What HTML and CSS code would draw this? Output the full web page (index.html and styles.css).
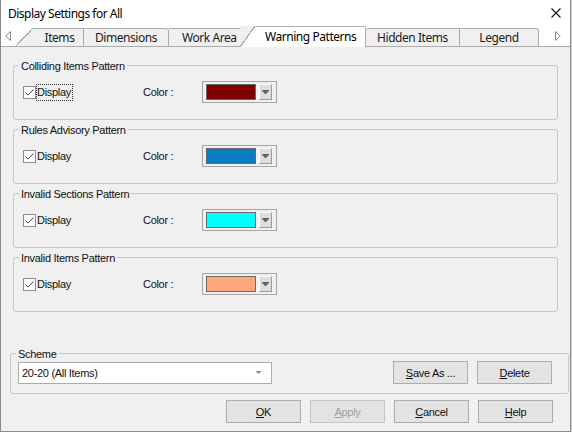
FILE: index.html
```html
<!DOCTYPE html>
<html>
<head>
<meta charset="utf-8">
<title>Display Settings for All</title>
<link rel="stylesheet" href="styles.css">
</head>
<body>
<div class="window">
  <div class="titlebar">
    <span class="title">Display Settings for All</span>
    <svg class="close" width="10" height="10" viewBox="0 0 10 10"><path d="M0.5 0.5 L9.5 9.5 M9.5 0.5 L0.5 9.5" stroke="#111" stroke-width="1.1" fill="none"/></svg>
  </div>
  <div class="tabstrip">
    <span class="arrow-area left"><svg width="6" height="10" viewBox="0 0 6 10"><path d="M5.5 0.5 L0.8 5 L5.5 9.5 Z" stroke="#8a8a8a" fill="none" stroke-width="1"/></svg></span>
    <span class="slant first"></span>
    <span class="tab t-items">Items</span>
    <span class="tab t-dim">Dimensions</span>
    <span class="tab t-work">Work Area</span>
    <span class="slant to-active"></span>
    <span class="tab active t-warn">Warning Patterns</span>
    <span class="tab t-hidden">Hidden Items</span>
    <span class="tab t-legend">Legend</span>
    <span class="arrow-area right"><svg width="6" height="10" viewBox="0 0 6 10"><path d="M0.5 0.5 L5.2 5 L0.5 9.5 Z" stroke="#8a8a8a" fill="none" stroke-width="1"/></svg></span>
  </div>

  <div class="panel">
    <div class="group">
      <div class="legend">Colliding Items Pattern</div>
      <div class="row">
        <div class="check">
          <span class="cb"><svg width="11" height="11" viewBox="0 0 11 11"><path d="M1.5 5.5 L4 8 L9.5 2.5" stroke="#404040" stroke-width="1" fill="none"/></svg></span>
          <span class="cblabel focus">Display</span>
        </div>
        <span class="clabel">Color :</span>
        <div class="colorbox">
          <span class="swatch c-maroon"></span>
          <span class="ddbtn"><svg width="11" height="14" viewBox="0 0 11 14"><path d="M1.5 5 L9.5 5 L5.5 9.5 Z" fill="#606060"/></svg></span>
        </div>
      </div>
    </div>

    <div class="group">
      <div class="legend">Rules Advisory Pattern</div>
      <div class="row">
        <div class="check">
          <span class="cb"><svg width="11" height="11" viewBox="0 0 11 11"><path d="M1.5 5.5 L4 8 L9.5 2.5" stroke="#404040" stroke-width="1" fill="none"/></svg></span>
          <span class="cblabel">Display</span>
        </div>
        <span class="clabel">Color :</span>
        <div class="colorbox">
          <span class="swatch c-blue"></span>
          <span class="ddbtn"><svg width="11" height="14" viewBox="0 0 11 14"><path d="M1.5 5 L9.5 5 L5.5 9.5 Z" fill="#606060"/></svg></span>
        </div>
      </div>
    </div>

    <div class="group">
      <div class="legend">Invalid Sections Pattern</div>
      <div class="row">
        <div class="check">
          <span class="cb"><svg width="11" height="11" viewBox="0 0 11 11"><path d="M1.5 5.5 L4 8 L9.5 2.5" stroke="#404040" stroke-width="1" fill="none"/></svg></span>
          <span class="cblabel">Display</span>
        </div>
        <span class="clabel">Color :</span>
        <div class="colorbox">
          <span class="swatch c-cyan"></span>
          <span class="ddbtn"><svg width="11" height="14" viewBox="0 0 11 14"><path d="M1.5 5 L9.5 5 L5.5 9.5 Z" fill="#606060"/></svg></span>
        </div>
      </div>
    </div>

    <div class="group">
      <div class="legend">Invalid Items Pattern</div>
      <div class="row">
        <div class="check">
          <span class="cb"><svg width="11" height="11" viewBox="0 0 11 11"><path d="M1.5 5.5 L4 8 L9.5 2.5" stroke="#404040" stroke-width="1" fill="none"/></svg></span>
          <span class="cblabel">Display</span>
        </div>
        <span class="clabel">Color :</span>
        <div class="colorbox">
          <span class="swatch c-salmon"></span>
          <span class="ddbtn"><svg width="11" height="14" viewBox="0 0 11 14"><path d="M1.5 5 L9.5 5 L5.5 9.5 Z" fill="#606060"/></svg></span>
        </div>
      </div>
    </div>
  </div>

  <div class="group scheme">
    <div class="legend">Scheme</div>
    <div class="scheme-row">
      <div class="combo">
        <span class="combo-text">20-20 (All Items)</span>
        <svg width="7" height="4" viewBox="0 0 7 4"><path d="M0.5 0 L6.5 0 L3.5 3 Z" fill="#8a8a8a"/></svg>
      </div>
      <div class="btns">
        <span class="btn"><u>S</u>ave As ...</span>
        <span class="btn"><u>D</u>elete</span>
      </div>
    </div>
  </div>

  <div class="bottom-btns">
    <span class="btn"><u>O</u>K</span>
    <span class="btn disabled"><u>A</u>pply</span>
    <span class="btn"><u>C</u>ancel</span>
    <span class="btn"><u>H</u>elp</span>
  </div>
</div>
</body>
</html>
```

FILE: styles.css
```css
html, body {
  margin: 0;
  padding: 0;
}

body {
  width: 572px;
  height: 432px;
  overflow: hidden;
  background: #d4d4d4;
  font-family: "Liberation Sans", Arial, sans-serif;
  font-size: 11px;
  letter-spacing: -0.3px;
  color: #000;
}

.window {
  width: 571px;
  height: 432px;
  box-sizing: border-box;
  background: #f0f0f0;
  border-left: 1px solid #8a8a8a;
  border-right: 1px solid #8a8a8a;
  border-bottom: 1px solid #8a8a8a;
  display: flex;
  flex-direction: column;
}

/* Title bar */
.titlebar {
  height: 26px;
  flex: none;
  background: #fff;
  display: flex;
  align-items: center;
  padding-left: 7px;
}

.title {
  font-family: "Noto Sans", "Open Sans", sans-serif;
  font-size: 12px;
  letter-spacing: -0.5px;
  color: #000;
}

.close {
  margin-left: auto;
  margin-right: 9px;
}

/* Tabs */
.tabstrip {
  height: 21px;
  flex: none;
  background: #fff;
  display: flex;
  align-items: flex-end;
  font-family: "Noto Sans", "Open Sans", sans-serif;
  font-size: 12px;
  letter-spacing: -0.45px;
}

.arrow-area {
  box-sizing: border-box;
  height: 21px;
  border-bottom: 1px solid #acacac;
  display: flex;
  align-items: center;
}

.arrow-area.left {
  width: 15px;
  padding-left: 4px;
}

.arrow-area.right {
  flex: 1;
  padding-left: 16px;
}

.slant {
  box-sizing: border-box;
  flex: none;
}

.slant.first {
  width: 17px;
  height: 19px;
  border-bottom: 1px solid #acacac;
  background: linear-gradient(to bottom right, #fff calc(50% - 0.6px), #acacac calc(50% - 0.6px), #acacac calc(50% + 0.6px), #f0f0f0 calc(50% + 0.6px));
}

.slant.to-active {
  width: 15px;
  height: 21px;
  background: linear-gradient(to bottom right, #f0f0f0 calc(50% - 0.6px), #acacac calc(50% - 0.6px), #acacac calc(50% + 0.6px), #fff calc(50% + 0.6px));
}

.tab {
  box-sizing: border-box;
  flex: none;
  height: 19px;
  background: #f0f0f0;
  border-top: 1px solid #acacac;
  border-bottom: 1px solid #acacac;
  display: flex;
  align-items: center;
  justify-content: center;
  color: #1a1a1a;
}

.t-items {
  width: 51px;
  border-right: 1px solid #acacac;
  padding-left: 3px;
}

.t-dim {
  width: 85px;
  border-right: 1px solid #acacac;
  border-top-right-radius: 3px;
}

.t-work {
  width: 71px;
  justify-content: flex-start;
  padding-left: 13px;
}

.tab.active {
  width: 111px;
  height: 21px;
  background: #fff;
  border-bottom: 0;
  border-right: 1px solid #acacac;
  border-top-right-radius: 2px;
  justify-content: flex-start;
  padding-left: 10px;
  padding-bottom: 1px;
  color: #000;
}

.t-hidden {
  width: 94px;
  border-right: 1px solid #acacac;
  border-top-left-radius: 3px;
}

.t-legend {
  width: 79px;
  border-right: 1px solid #acacac;
  border-top-right-radius: 3px;
}

/* Panel and groups */
.panel {
  flex: none;
  padding-top: 18px;
}

.group {
  box-sizing: border-box;
  width: 545px;
  height: 55px;
  margin: 0 0 9px 12px;
  border: 1px solid #c6c6c6;
  border-radius: 3px;
}

.legend {
  width: fit-content;
  margin: -7px 0 0 5px;
  padding: 0 2px;
  line-height: 14px;
  background: #f0f0f0;
  color: #111;
}

.row {
  display: flex;
  align-items: center;
  height: 22px;
  margin-top: 8px;
  padding-left: 9px;
}

.check {
  width: 120px;
  display: flex;
  align-items: center;
}

.cb {
  box-sizing: border-box;
  width: 13px;
  height: 13px;
  border: 1px solid #8c8c8c;
  background: #fbfbfb;
  display: flex;
}

.cblabel {
  border: 1px dotted transparent;
  padding: 0 1px 0 0;
  line-height: 15px;
  color: #111;
}

.cblabel.focus {
  border-color: #333;
}

.clabel {
  width: 59px;
  color: #111;
}

.colorbox {
  box-sizing: border-box;
  width: 75px;
  height: 22px;
  border: 1px solid #a6a6a6;
  display: flex;
  align-items: center;
  padding-left: 3px;
  gap: 3px;
}

.swatch {
  box-sizing: border-box;
  width: 50px;
  height: 16px;
  border: 1px solid #6a6a6a;
}

.c-maroon { background: #800000; }
.c-blue { background: #0a7cc1; }
.c-cyan { background: #00ffff; }
.c-salmon { background: #ffa67c; }

.ddbtn {
  box-sizing: border-box;
  width: 13px;
  height: 16px;
  background: #dedede;
  border-top: 1px solid #f8f8f8;
  border-left: 1px solid #f8f8f8;
  border-right: 1px solid #9a9a9a;
  border-bottom: 1px solid #9a9a9a;
  display: flex;
}

/* Scheme */
.group.scheme {
  width: 559px;
  height: 41px;
  margin: 32px 0 0 9px;
  flex: none;
}

.scheme-row {
  display: flex;
  align-items: flex-start;
  padding: 0 16px 0 7px;
}

.combo {
  box-sizing: border-box;
  width: 254px;
  height: 22px;
  margin-top: 1px;
  background: #fff;
  border: 1px solid #acacac;
  display: flex;
  align-items: center;
  padding: 0 9px 0 3px;
}

.combo-text {
  flex: 1;
  color: #111;
}

.btns {
  margin-left: auto;
  display: flex;
  gap: 9px;
}

.btn {
  box-sizing: border-box;
  width: 75px;
  height: 23px;
  background: #e3e3e3;
  border: 1px solid #adadad;
  display: flex;
  align-items: center;
  justify-content: center;
  color: #111;
}

.btn.disabled {
  color: #a0a0a0;
  border-color: #c4c4c4;
}

.bottom-btns {
  display: flex;
  justify-content: flex-end;
  gap: 9px;
  margin-top: 6px;
  padding-right: 17px;
}
```
